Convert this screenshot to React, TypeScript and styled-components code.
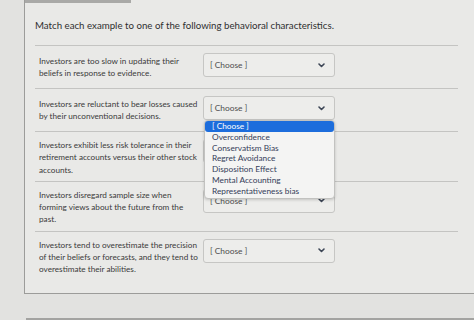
import React from 'react';
import styled, { createGlobalStyle } from 'styled-components';

const GlobalStyle = createGlobalStyle`
  html, body {
    margin: 0;
    padding: 0;
    background: #e2e2e0;
    font-family: Lato, "Open Sans", sans-serif;
    overflow: hidden;
  }
`;

interface Item {
  text: string[];
  open?: boolean;
}

const items: Item[] = [
  { text: ['Investors are too slow in updating their', 'beliefs in response to evidence.'] },
  { text: ['Investors are reluctant to bear losses caused', 'by their unconventional decisions.'], open: true },
  { text: ['Investors exhibit less risk tolerance in their', 'retirement accounts versus their other stock', 'accounts.'] },
  { text: ['Investors disregard sample size when', 'forming views about the future from the', 'past.'] },
  { text: ['Investors tend to overestimate the precision', 'of their beliefs or forecasts, and they tend to', 'overestimate their abilities.'] },
];

const options = [
  '[ Choose ]',
  'Overconfidence',
  'Conservatism Bias',
  'Regret Avoidance',
  'Disposition Effect',
  'Mental Accounting',
  'Representativeness bias',
];

function Chevron() {
  return (
    <svg width="7" height="5" viewBox="0 0 7 5">
      <path d="M1 1 L3.5 3.5 L6 1" fill="none" stroke="#3d4656" strokeWidth="1.6" strokeLinecap="round" strokeLinejoin="round" />
    </svg>
  );
}

export default function App() {
  return (
    <Page>
      <GlobalStyle />
      <Card>
        <TopStrip />
        <Body>
          <Title>Match each example to one of the following behavioral characteristics.</Title>
          <List>
            {items.map((item, i) => (
              <Row key={i}>
                <Prompt $lines={item.text.length}>
                  {item.text.map((line, j) => (
                    <div key={j}>{line}</div>
                  ))}
                </Prompt>
                <SelectWrap>
                  <Select>
                    <span>[ Choose ]</span>
                    <Chevron />
                  </Select>
                  {item.open && (
                    <Menu>
                      {options.map((o, k) => (
                        <Option key={o} $active={k === 0}>{o}</Option>
                      ))}
                    </Menu>
                  )}
                </SelectWrap>
              </Row>
            ))}
          </List>
        </Body>
      </Card>
      <NextCard />
    </Page>
  );
}

const Page = styled.div`
  padding-left: 24px;
`;

const Card = styled.div`
  background: #e9e9e7;
  border-left: 1px solid #9c9c9a;
  border-bottom: 1px solid #9c9c9a;
`;

const TopStrip = styled.div`
  width: 106px;
  height: 3px;
  background: #a9a9a7;
`;

const Body = styled.div`
  padding: 15px 16px 12px 10px;
`;

const Title = styled.div`
  font-size: 9.7px;
  line-height: 14px;
  color: #2f2f2f;
  margin-bottom: 13px;
`;

const List = styled.div`
  width: 423px;
  border-top: 1px solid #c4c4c2;
`;

const Row = styled.div`
  display: flex;
  align-items: flex-start;
  gap: 4px;
  padding: 7px 0 5px 4px;
  & + & {
    border-top: 1px solid #c4c4c2;
  }
`;

const Prompt = styled.div<{ $lines: number }>`
  width: 160px;
  padding-top: ${p => (p.$lines < 3 ? '2px' : '0')};
  font-size: 8.2px;
  line-height: 12.3px;
  color: #3a3a3a;
  white-space: nowrap;
`;

const SelectWrap = styled.div`
  position: relative;
  margin-bottom: 6px;
`;

const Select = styled.div`
  box-sizing: border-box;
  width: 132px;
  height: 24px;
  display: flex;
  align-items: center;
  justify-content: space-between;
  padding: 0 9px 0 6px;
  background: #ededeb;
  border: 1px solid #c6c6c4;
  border-radius: 3px;
  font-size: 8.4px;
  color: #4e4e4e;
`;

const Menu = styled.div`
  position: absolute;
  top: 100%;
  left: 1px;
  z-index: 5;
  box-sizing: border-box;
  width: 131px;
  padding-bottom: 1px;
  background: #f4f4f3;
  border: 1px solid #c2c2c0;
  border-radius: 4px;
  box-shadow: 0 1px 3px rgba(0, 0, 0, 0.18);
`;

const Option = styled.div<{ $active?: boolean }>`
  height: 10.8px;
  line-height: 10.8px;
  padding-left: 7px;
  font-size: 8.3px;
  border-radius: 3px;
  color: ${p => (p.$active ? '#ffffff' : '#34405a')};
  background: ${p => (p.$active ? '#1d6ddc' : 'transparent')};
`;

const NextCard = styled.div`
  margin-top: 24px;
  margin-left: 2px;
  height: 6px;
  background: #a3a3a1;
`;
